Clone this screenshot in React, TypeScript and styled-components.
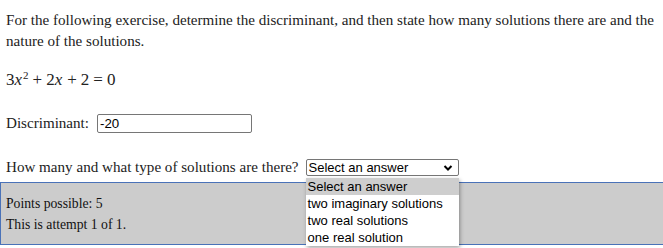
import React from 'react'
import styled, { createGlobalStyle } from 'styled-components'

const GlobalStyle = createGlobalStyle`
  html, body {
    margin: 0;
    padding: 0;
    background: #fff;
  }
  body {
    font-family: "Liberation Serif", "Times New Roman", serif;
    font-size: 15.1px;
    color: #222;
  }
`

const Page = styled.div`
  width: 663px;
  height: 248px;
  overflow: hidden;
  display: flex;
  flex-direction: column;
`

const Question = styled.div`
  padding: 10px 0 0 6px;
  display: flex;
  flex-direction: column;
`

const Prompt = styled.p`
  margin: 0;
  line-height: 21px;
`

const Equation = styled.div`
  margin-top: 18px;
  height: 20px;
  line-height: 20px;
  font-size: 17px;
  font-family: "Liberation Serif", "DejaVu Serif", serif;
  color: #222;
  display: flex;
  align-items: center;
`

const MathVar = styled.i`
  font-style: italic;
  margin-right: 1px;
`

const Sup = styled.sup`
  font-size: 11px;
  line-height: 0;
  position: relative;
  top: -5px;
`

const Op = styled.span`
  margin: 0 4px;
`

const Row = styled.div<{ gap: number }>`
  margin-top: ${(p) => p.gap}px;
  display: flex;
  align-items: center;
  height: 21px;
  line-height: 21px;
`

const Label = styled.span<{ space: number }>`
  margin-right: ${(p) => p.space}px;
`

const TextInput = styled.div`
  box-sizing: border-box;
  width: 155px;
  height: 19px;
  border: 1px solid #767676;
  border-radius: 2px;
  padding: 0 2px;
  font-family: "Liberation Sans", Arial, sans-serif;
  font-size: 13.3px;
  line-height: 17px;
  color: #000;
`

const SelectWrap = styled.div`
  position: relative;
`

const SelectBox = styled.div`
  box-sizing: border-box;
  width: 153px;
  height: 17px;
  border: 1px solid #767676;
  border-radius: 2px;
  padding: 0 0 0 2px;
  display: flex;
  align-items: center;
  justify-content: space-between;
  font-family: "Liberation Sans", Arial, sans-serif;
  font-size: 13px;
  line-height: 15px;
  color: #000;
`

const Chevron = styled.svg`
  width: 10px;
  height: 10px;
  margin-right: 5px;
`

const Dropdown = styled.ul`
  position: absolute;
  left: 0;
  top: 19px;
  width: 153px;
  margin: 0;
  padding: 0;
  list-style: none;
  background: #fff;
  box-shadow: 1px 2px 4px rgba(0, 0, 0, 0.35);
  z-index: 10;
`

const Option = styled.li<{ active?: boolean }>`
  height: 17px;
  line-height: 17px;
  padding-left: 2px;
  font-family: "Liberation Sans", Arial, sans-serif;
  font-size: 13px;
  color: #000;
  background: ${(p) => (p.active ? '#cecece' : '#fff')};
`

const InfoBox = styled.div`
  margin-top: 4px;
  box-sizing: border-box;
  height: 63px;
  background: #cccccc;
  border: 1px solid #4a72b8;
  border-right: none;
  padding: 10px 0 0 5px;
  line-height: 21px;
  font-size: 13.7px;
  color: #111;
`

const InfoLine = styled.div``

const options = [
  'Select an answer',
  'two imaginary solutions',
  'two real solutions',
  'one real solution',
]

const App: React.FC = () => {
  return (
    <Page>
      <GlobalStyle />
      <Question>
        <Prompt>
          For the following exercise, determine the discriminant, and then state how many
          solutions there are and the nature of the solutions.
        </Prompt>

        <Equation>
          3<MathVar>x</MathVar>
          <Sup>2</Sup>
          <Op>+</Op>2<MathVar>x</MathVar>
          <Op>+</Op>2<Op>=</Op>0
        </Equation>

        <Row gap={23}>
          <Label space={8}>Discriminant:</Label>
          <TextInput>-20</TextInput>
        </Row>

        <Row gap={23}>
          <Label space={7}>How many and what type of solutions are there?</Label>
          <SelectWrap>
            <SelectBox>
              Select an answer
              <Chevron viewBox="0 0 10 10">
                <path d="M1.5 3 L5 6.5 L8.5 3" fill="none" stroke="#000" strokeWidth="2" />
              </Chevron>
            </SelectBox>
            <Dropdown>
              {options.map((o, i) => (
                <Option key={o} active={i === 0}>
                  {o}
                </Option>
              ))}
            </Dropdown>
          </SelectWrap>
        </Row>
      </Question>

      <InfoBox>
        <InfoLine>Points possible: 5</InfoLine>
        <InfoLine>This is attempt 1 of 1.</InfoLine>
      </InfoBox>
    </Page>
  )
}

export default App
